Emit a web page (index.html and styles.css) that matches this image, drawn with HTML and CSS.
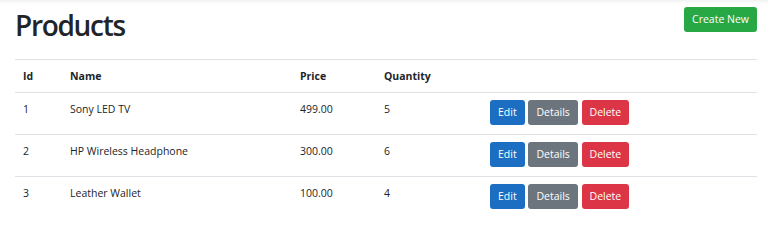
FILE: index.html
```html
<!DOCTYPE html>
<html lang="en">
<head>
  <meta charset="UTF-8" />
  <title>Products</title>
  <link rel="stylesheet" href="styles.css">
</head>
<body>

  <div class="topbar"></div>

  <div class="container">
    <div class="title-row">
      <h1>Products</h1>
      <a class="btn btn-success" href="#">Create New</a>
    </div>

    <table class="table">
      <colgroup>
        <col class="col-id" />
        <col class="col-name" />
        <col class="col-price" />
        <col class="col-qty" />
        <col />
      </colgroup>
      <thead>
        <tr>
          <th>Id</th>
          <th>Name</th>
          <th>Price</th>
          <th>Quantity</th>
          <th></th>
        </tr>
      </thead>
      <tbody>
        <tr>
          <td>1</td>
          <td>Sony LED TV</td>
          <td>499.00</td>
          <td>5</td>
          <td class="actions">
            <a class="btn btn-primary" href="#">Edit</a>
            <a class="btn btn-secondary" href="#">Details</a>
            <a class="btn btn-danger" href="#">Delete</a>
          </td>
        </tr>
        <tr>
          <td>2</td>
          <td>HP Wireless Headphone</td>
          <td>300.00</td>
          <td>6</td>
          <td class="actions">
            <a class="btn btn-primary" href="#">Edit</a>
            <a class="btn btn-secondary" href="#">Details</a>
            <a class="btn btn-danger" href="#">Delete</a>
          </td>
        </tr>
        <tr>
          <td>3</td>
          <td>Leather Wallet</td>
          <td>100.00</td>
          <td>4</td>
          <td class="actions">
            <a class="btn btn-primary" href="#">Edit</a>
            <a class="btn btn-secondary" href="#">Details</a>
            <a class="btn btn-danger" href="#">Delete</a>
          </td>
        </tr>
      </tbody>
    </table>
  </div>

</body>
</html>
```

FILE: styles.css
```css
* {
  box-sizing: border-box;
}

body {
  margin: 0;
  font-family: 'Open Sans', sans-serif;
  font-size: 10.5px;
  color: #212529;
  background-color: white;
}

.topbar {
  height: 4px;
  background: linear-gradient(#f2f2f2, #ffffff);
}

.container {
  padding: 0 11px 0 15px;
}

.title-row {
  display: flex;
  justify-content: space-between;
  align-items: flex-start;
  height: 55px;
}

h1 {
  margin: 4px 0 0 0;
  font-size: 28px;
  font-weight: 600;
  letter-spacing: -1.3px;
  line-height: 34px;
}

.btn {
  display: inline-block;
  padding: 0 8px;
  height: 25px;
  line-height: 25px;
  font-size: 10.5px;
  color: white;
  text-decoration: none;
  border-radius: 3px;
}

.title-row .btn {
  margin-top: 3px;
}

.btn-success {
  background-color: #28a745;
}

.btn-primary {
  background-color: #1b6ec2;
}

.btn-secondary {
  background-color: #6c757d;
}

.btn-danger {
  background-color: #dc3545;
}

.table {
  width: 742px;
  table-layout: fixed;
  border-collapse: collapse;
}

.col-id { width: 47px; }
.col-name { width: 230px; }
.col-price { width: 84px; }
.col-qty { width: 106px; }

th,
td {
  padding: 8px;
  text-align: left;
  vertical-align: top;
  line-height: 17px;
  border-top: 1px solid #dee2e6;
}

th {
  font-weight: bold;
  padding: 8px 8px 7px;
  border-bottom: 1px solid #dee2e6;
}

td {
  height: 42px;
}

.actions {
  padding: 7px 8px 0;
  white-space: nowrap;
}

.actions .btn {
  margin-right: 1px;
}
```
